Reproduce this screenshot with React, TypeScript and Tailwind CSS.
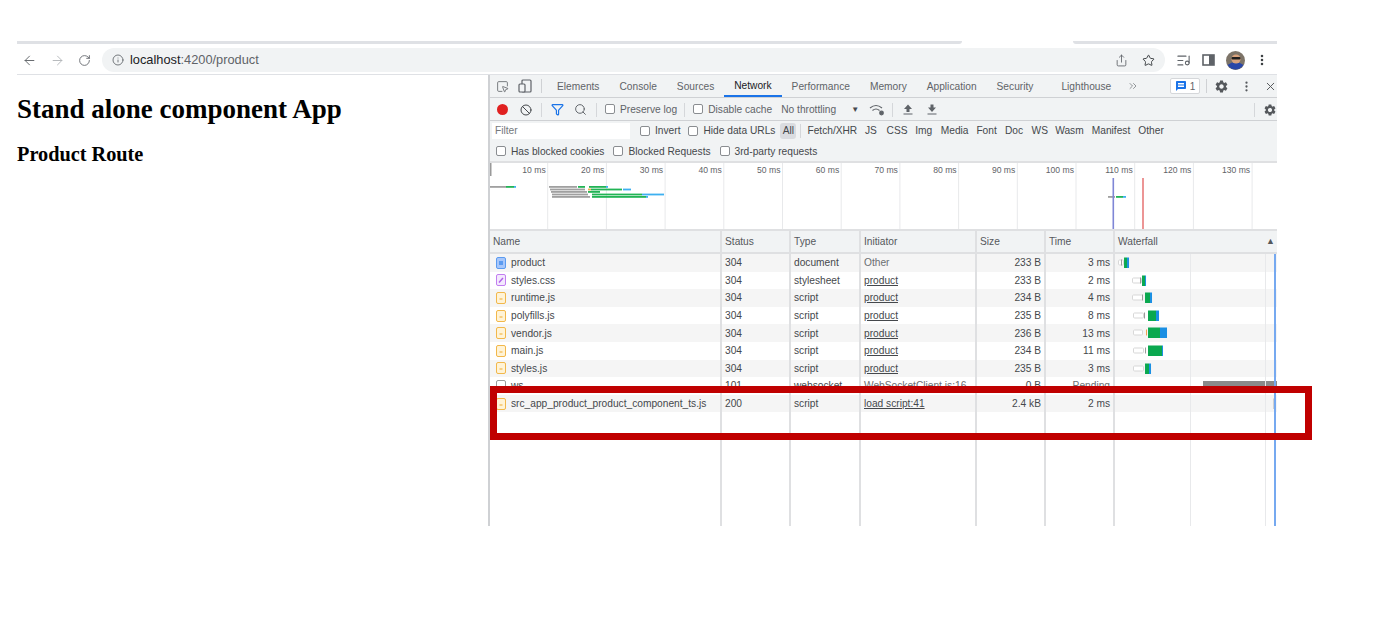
import { ArrowLeft, ArrowRight, Ban, ChevronsRight, EllipsisVertical, Funnel, Info, ListMusic, RotateCw, Search, Share, SquareMousePointer, Star, X } from "lucide-react"
import { MdMessage, MdSettings } from "react-icons/md"

type Bar = { x: number; w: number; c: string }

const rows = [
  { name: "product", kind: "doc", status: "304", type: "document", init: "Other", link: false, size: "233 B", time: "3 ms", bars: [{ x: 3, w: 6, c: "box" }, { x: 6, w: 1, c: "#9a9a9a" }, { x: 9, w: 3, c: "#0aa84f" }, { x: 12, w: 2, c: "#1a8fe3" }] },
  { name: "styles.css", kind: "css", status: "304", type: "stylesheet", init: "product", link: true, size: "233 B", time: "2 ms", bars: [{ x: 17, w: 10, c: "box" }, { x: 25, w: 1, c: "#9a9a9a" }, { x: 27, w: 3, c: "#0aa84f" }, { x: 30, w: 1, c: "#1a8fe3" }] },
  { name: "runtime.js", kind: "js", status: "304", type: "script", init: "product", link: true, size: "234 B", time: "4 ms", bars: [{ x: 17, w: 11, c: "box" }, { x: 27, w: 1, c: "#9a9a9a" }, { x: 30, w: 5, c: "#0aa84f" }, { x: 35, w: 2, c: "#1a8fe3" }] },
  { name: "polyfills.js", kind: "js", status: "304", type: "script", init: "product", link: true, size: "235 B", time: "8 ms", bars: [{ x: 18, w: 11, c: "box" }, { x: 29, w: 1, c: "#9a9a9a" }, { x: 33, w: 8, c: "#0aa84f" }, { x: 41, w: 3, c: "#1a8fe3" }] },
  { name: "vendor.js", kind: "js", status: "304", type: "script", init: "product", link: true, size: "236 B", time: "13 ms", bars: [{ x: 18, w: 10, c: "box" }, { x: 31, w: 1, c: "#f0a050" }, { x: 33, w: 12, c: "#0aa84f" }, { x: 45, w: 7, c: "#1a8fe3" }] },
  { name: "main.js", kind: "js", status: "304", type: "script", init: "product", link: true, size: "234 B", time: "11 ms", bars: [{ x: 18, w: 11, c: "box" }, { x: 30, w: 1, c: "#9a9a9a" }, { x: 33, w: 14, c: "#0aa84f" }, { x: 47, w: 1, c: "#1a8fe3" }] },
  { name: "styles.js", kind: "js", status: "304", type: "script", init: "product", link: true, size: "235 B", time: "3 ms", bars: [{ x: 18, w: 11, c: "box" }, { x: 30, w: 4, c: "#0aa84f" }, { x: 34, w: 2, c: "#1a8fe3" }] },
  { name: "ws", kind: "ws", status: "101", type: "websocket", init: "WebSocketClient.js:16", link: false, size: "0 B", time: "Pending", bars: [{ x: 88, w: 74, c: "#8a8a8a" }] },
  { name: "src_app_product_product_component_ts.js", kind: "js", status: "200", type: "script", init: "load script:41", link: true, size: "2.4 kB", time: "2 ms", bars: [{ x: 158, w: 2, c: "#d0d0d0" }] as Bar[] },
]

const ticks = ["10 ms", "20 ms", "30 ms", "40 ms", "50 ms", "60 ms", "70 ms", "80 ms", "90 ms", "100 ms", "110 ms", "120 ms", "130 ms"]

const filters = [
  { t: "Fetch/XHR", w: "w-[49px]" },
  { t: "JS", w: "w-[13px]" },
  { t: "CSS", w: "w-[20px]" },
  { t: "Img", w: "w-[17px]" },
  { t: "Media", w: "w-[27px]" },
  { t: "Font", w: "w-[20px]" },
  { t: "Doc", w: "w-[18px]" },
  { t: "WS", w: "w-[15px]" },
  { t: "Wasm", w: "w-[28px]" },
  { t: "Manifest", w: "w-[38px]" },
  { t: "Other", w: "w-[26px]" },
]

function Check({ label, className }: { label: string; className?: string }) {
  return (
    <div className={`flex items-center gap-[5px] ${className ?? ""}`}>
      <span className="w-[10px] h-[10px] rounded-[2px] border border-[#8a8d91] bg-white shrink-0" />
      <span className="whitespace-nowrap">{label}</span>
    </div>
  )
}

function FileIcon({ kind }: { kind: string }) {
  if (kind === "doc") {
    return (
      <svg width="10" height="12" viewBox="0 0 10 12" className="shrink-0 ml-[3px]">
        <rect x="0.5" y="0.5" width="9" height="11" rx="1.5" fill="#a8c7fa" stroke="#5b9bf0" />
        <rect x="3" y="4" width="4" height="4" fill="#5b9bf0" />
      </svg>
    )
  }
  if (kind === "css") {
    return (
      <svg width="10" height="12" viewBox="0 0 10 12" className="shrink-0 ml-[3px]">
        <rect x="0.5" y="0.5" width="9" height="11" rx="1.5" fill="#f3e8fd" stroke="#c27ef0" />
        <path d="M3 8.5 L7 4" stroke="#b05ee8" strokeWidth="1.4" />
      </svg>
    )
  }
  if (kind === "js") {
    return (
      <svg width="10" height="12" viewBox="0 0 10 12" className="shrink-0 ml-[3px]">
        <rect x="0.5" y="0.5" width="9" height="11" rx="1.5" fill="#fff3d6" stroke="#f2b84b" />
        <path d="M3.5 7 H6.5" stroke="#f2b84b" strokeWidth="1.2" />
      </svg>
    )
  }
  return (
    <svg width="10" height="12" viewBox="0 0 10 12" className="shrink-0 ml-[3px]">
      <rect x="0.5" y="0.5" width="9" height="11" rx="1.5" fill="#fff" stroke="#9a9a9a" />
    </svg>
  )
}

function Column({ title, width, right, render }: { title: string; width: string; right?: boolean; render: (r: (typeof rows)[number]) => React.ReactNode }) {
  return (
    <div className={`${width} shrink-0 flex flex-col border-r-2 border-[#dfe0e2]`}>
      <div className="h-[23px] shrink-0 flex items-center px-[3px] bg-[#f1f3f4] border-b-2 border-[#dfe0e2] text-[#55585c]">{title}</div>
      {rows.map((r, i) => (
        <div key={r.name} className={`h-[17.6px] shrink-0 flex items-center gap-[5px] px-[3px] overflow-hidden whitespace-nowrap ${right ? "justify-end" : ""} ${i % 2 === 0 ? "bg-[#f5f5f5]" : "bg-white"}`}>
          {render(r)}
        </div>
      ))}
    </div>
  )
}

function Overview() {
  const marks = [
    [490, 186, 16, "#a0a0a0"], [506, 186, 8, "#22b455"], [514, 186, 2, "#3db0f0"],
    [549, 186, 28, "#a0a0a0"], [578, 186, 7, "#22b455"], [589, 186, 17, "#22b455"], [606, 186, 2, "#3db0f0"],
    [550, 188.6, 35, "#a0a0a0"], [588, 188.6, 3, "#f0b050"], [591, 188.6, 31, "#22b455"], [623, 188.6, 8, "#3db0f0"],
    [551, 191, 36, "#a0a0a0"], [588, 191, 12, "#22b455"],
    [552, 193.6, 36, "#a0a0a0"], [592, 193.6, 50, "#22b455"], [642, 193.6, 22, "#3db0f0"],
    [552, 196, 38, "#a0a0a0"], [592, 196, 54, "#22b455"], [646, 196, 2, "#3db0f0"],
    [1108, 196, 7, "#a0a0a0"], [1116, 196, 7, "#22b455"], [1123, 196, 3, "#3db0f0"],
  ] as const
  return (
    <svg width="787" height="66" viewBox="490 163 787 66" className="block">
      {ticks.map((t, i) => {
        const x = 489 + 58.7 * (i + 1)
        return (
          <g key={t}>
            <line x1={x} y1="163" x2={x} y2="229" stroke="#e8e9eb" />
            <text x={x - 2} y="173" textAnchor="end" fontSize="8.6" fontFamily="Liberation Sans" fill="#5f6368">{t}</text>
          </g>
        )
      })}
      <rect x="490" y="163" width="1.5" height="13" fill="#9a9a9a" />
      {marks.map(([x, y, w, c], i) => (
        <rect key={i} x={x} y={y} width={w} height="1.8" fill={c} />
      ))}
      <rect x="1112.5" y="178" width="1.6" height="51" fill="#7f86d6" />
      <rect x="1142.2" y="178" width="1.6" height="51" fill="#e87c7c" />
    </svg>
  )
}

export default function App() {
  return (
    <div className="relative w-[1384px] h-[623px] overflow-hidden bg-white pt-[41px] pl-[17px] font-['Liberation_Sans',sans-serif]">
      <div className="w-[1260px] flex flex-col">
        {/* tab strip leftovers */}
        <div className="h-[3px] flex justify-between">
          <div className="w-[945px] bg-[#dfe1e5] rounded-br-[4px]" />
          <div className="w-[204px] bg-[#dfe1e5] rounded-bl-[4px]" />
        </div>

        {/* browser toolbar */}
        <div className="h-[31px] flex items-center border-b border-[#dfe1e5] pt-[3px] pb-[1px] text-[#5f6368]">
          <ArrowLeft className="w-[15px] h-[15px] ml-[5px]" strokeWidth={1.5} />
          <ArrowRight className="w-[15px] h-[15px] ml-[13px] text-[#b3b6ba]" strokeWidth={1.5} />
          <RotateCw className="w-[13px] h-[13px] ml-[13px]" strokeWidth={1.6} />
          <div className="ml-[11px] w-[1063px] h-[24px] rounded-full bg-[#f1f3f4] flex items-center pl-[10px] pr-[8px]">
            <Info className="w-[12px] h-[12px]" strokeWidth={1.7} />
            <span className="ml-[6px] text-[12.8px] text-[#5f6368]"><span className="text-[#202124]">localhost</span>:4200/product</span>
            <Share className="ml-auto w-[13px] h-[13px]" strokeWidth={1.6} />
            <Star className="ml-[14px] mr-[2px] w-[13px] h-[13px] text-[#3c4043]" strokeWidth={1.8} />
          </div>
          <ListMusic className="ml-[11px] w-[15px] h-[15px]" strokeWidth={1.7} />
          <svg width="13" height="12" viewBox="0 0 13 12" className="ml-[11px]">
            <rect x="1" y="1" width="11" height="10" fill="#fff" stroke="#5f6368" strokeWidth="1.6" />
            <rect x="7" y="1" width="5" height="10" fill="#5f6368" />
          </svg>
          <svg width="19" height="19" viewBox="0 0 19 19" className="ml-[11px]">
            <circle cx="9.5" cy="9.5" r="9.5" fill="#7d7468" />
            <path d="M1.5 14 Q9.5 8 17.5 14 A9.5 9.5 0 0 1 1.5 14Z" fill="#2a47a8" />
            <circle cx="10" cy="8" r="4.6" fill="#d9a27c" />
            <rect x="5.5" y="6" width="9" height="2.4" rx="1" fill="#1d1d1d" />
          </svg>
          <EllipsisVertical className="ml-[10px] w-[14px] h-[14px] text-[#3c4043]" strokeWidth={2.4} />
        </div>

        <div className="flex h-[451px]">
          {/* page */}
          <div className="w-[471px] shrink-0 font-['Liberation_Serif',serif] font-bold text-black">
            <h1 className="text-[27px] leading-[30px] mt-[19px]">Stand alone component App</h1>
            <h2 className="text-[20.3px] leading-[24px] mt-[18px]">Product Route</h2>
          </div>

          {/* devtools */}
          <div className="w-[789px] shrink-0 flex flex-col border-l-2 border-[#cfd1d4] text-[10.2px] text-[#45484c] overflow-hidden">
            <div className="h-[23px] shrink-0 flex items-center bg-[#f1f3f4] border-b border-[#cfd1d4] text-[#5f6368]">
              <SquareMousePointer className="ml-[6px] w-[13px] h-[13px]" strokeWidth={1.5} />
              <svg width="14" height="14" viewBox="0 0 14 14" className="ml-[9px]" fill="none" stroke="#5f6368" strokeWidth="1.2">
                <rect x="4" y="1" width="9" height="12" rx="1" />
                <rect x="1" y="5" width="6" height="8" rx="1" fill="#f1f3f4" />
              </svg>
              <div className="ml-[9px] w-px h-[14px] bg-[#cfd1d4]" />
              <div className="ml-[5px] flex self-stretch items-center">
                {["Elements", "Console", "Sources"].map((t) => (
                  <span key={t} className="px-[10px] pt-[2px]">{t}</span>
                ))}
                <span className="px-[10px] pt-[2px] self-stretch flex items-center text-[#202124] border-b-2 border-[#1a73e8]">Network</span>
                {["Performance", "Memory", "Application", "Security"].map((t) => (
                  <span key={t} className="px-[10px] pt-[2px]">{t}</span>
                ))}
                <span className="ml-[8px] px-[10px] pt-[2px]">Lighthouse</span>
              </div>
              <ChevronsRight className="ml-[6px] w-[12px] h-[12px]" strokeWidth={1.3} />
              <div className="ml-auto w-[30px] h-[16px] rounded-[2px] border border-[#d5d7da] bg-white flex items-center justify-center gap-[3px] text-[10px]">
                <MdMessage className="w-[12px] h-[12px] text-[#1a73e8]" />
                <span>1</span>
              </div>
              <div className="ml-[6px] w-px h-[14px] bg-[#cfd1d4]" />
              <MdSettings className="ml-[7px] w-[15px] h-[15px] text-[#55585c]" />
              <EllipsisVertical className="ml-[11px] w-[13px] h-[13px] text-[#55585c]" strokeWidth={2.2} />
              <X className="ml-[11px] w-[13px] h-[13px] shrink-0 text-[#55585c]" strokeWidth={1.8} />
            </div>

            <div className="h-[23px] shrink-0 flex items-center bg-[#f1f3f4] border-b border-[#cfd1d4] pt-[1px] text-[#5f6368]">
              <span className="ml-[7px] w-[11px] h-[11px] rounded-full bg-[#e02020]" />
              <Ban className="ml-[12px] w-[12px] h-[12px] text-[#45484c]" strokeWidth={2} />
              <div className="ml-[9px] w-px h-[14px] bg-[#d5d7da]" />
              <Funnel className="ml-[9px] w-[13px] h-[13px] text-[#1a73e8]" strokeWidth={2.2} />
              <Search className="ml-[10px] w-[13px] h-[13px]" strokeWidth={1.8} />
              <div className="ml-[9px] w-px h-[14px] bg-[#d5d7da]" />
              <Check label="Preserve log" className="ml-[8px]" />
              <div className="ml-[7px] w-px h-[14px] bg-[#d5d7da]" />
              <Check label="Disable cache" className="ml-[8px]" />
              <span className="ml-[9px]">No throttling</span>
              <span className="ml-[15px] text-[8px] text-[#45484c]">▼</span>
              <svg width="16" height="12" viewBox="0 0 16 12" className="ml-[10px]" fill="none" stroke="#5f6368" strokeWidth="1.2">
                <path d="M1 4 Q7 -1 13 4" />
                <path d="M3.5 6.5 Q7 3.5 10.5 6.5" />
                <circle cx="12.5" cy="9" r="1.8" fill="#5f6368" />
              </svg>
              <div className="ml-[7px] w-px h-[14px] bg-[#d5d7da]" />
              <svg width="10" height="11" viewBox="0 0 10 11" className="ml-[10px]" fill="#5f6368">
                <path d="M5 0.5 L9 5 H6.5 V8 H3.5 V5 H1Z" />
                <rect x="0.5" y="9.5" width="9" height="1" />
              </svg>
              <svg width="10" height="11" viewBox="0 0 10 11" className="ml-[14px]" fill="#5f6368">
                <path d="M5 8 L9 3.5 H6.5 V0.5 H3.5 V3.5 H1Z" />
                <rect x="0.5" y="9.5" width="9" height="1" />
              </svg>
              <div className="ml-auto w-px h-[14px] bg-[#d5d7da]" />
              <MdSettings className="ml-[8px] mr-0 w-[14px] h-[14px] shrink-0 text-[#55585c]" />
            </div>

            <div className="h-[21px] shrink-0 flex items-center bg-[#f1f3f4] pb-[1px] text-[#45484c]">
              <div className="ml-[2px] w-[138px] h-[16px] bg-white flex items-center pl-[3px] text-[#75787c]">Filter</div>
              <Check label="Invert" className="ml-[10px]" />
              <Check label="Hide data URLs" className="ml-[8px]" />
              <span className="ml-[5px] w-[16px] h-[16px] rounded-[3px] bg-[#dadce0] flex items-center justify-center">All</span>
              <div className="ml-[4px] w-px h-[14px] bg-[#d5d7da]" />
              <div className="ml-[6px] flex gap-[8.6px]">
                {filters.map((f) => (
                  <span key={f.t} className={`${f.w} whitespace-nowrap`}>{f.t}</span>
                ))}
              </div>
            </div>

            <div className="h-[21px] shrink-0 flex items-center bg-[#f1f3f4] border-b-2 border-[#dfe0e2] pl-[6px]">
              <Check label="Has blocked cookies" />
              <Check label="Blocked Requests" className="ml-[9px]" />
              <Check label="3rd-party requests" className="ml-[9px]" />
            </div>

            <div className="h-[68px] shrink-0 border-b-2 border-[#dfe0e2]">
              <Overview />
            </div>

            {/* request table */}
            <div className="flex flex-1 min-h-0">
              <Column
                title="Name"
                width="w-[232px]"
                render={(r) => (
                  <>
                    <FileIcon kind={r.kind} />
                    <span>{r.name}</span>
                  </>
                )}
              />
              <Column title="Status" width="w-[69px]" render={(r) => r.status} />
              <Column title="Type" width="w-[70px]" render={(r) => r.type} />
              <Column title="Initiator" width="w-[116px]" render={(r) => (r.link ? <span className="underline">{r.init}</span> : <span className="text-[#6b6e72]">{r.init}</span>)} />
              <Column title="Size" width="w-[69px]" right render={(r) => r.size} />
              <Column title="Time" width="w-[69px]" right render={(r) => (r.time === "Pending" ? <span className="text-[#6b6e72]">{r.time}</span> : r.time)} />
              <div className="relative flex-1 flex flex-col">
                <div className="h-[23px] shrink-0 flex items-center justify-between pl-[3px] pr-[2px] bg-[#f1f3f4] border-b-2 border-[#dfe0e2] text-[#55585c]">
                  <span>Waterfall</span>
                  <span className="text-[9px]">▲</span>
                </div>
                {rows.map((r, i) => (
                  <div key={r.name} className={`h-[17.6px] shrink-0 ${i % 2 === 0 ? "bg-[#f5f5f5]" : "bg-white"}`}>
                    <svg width="162" height="17.6" viewBox="0 0 162 17.6" className="block">
                      {r.bars.map((b, j) =>
                        b.c === "box" ? (
                          <rect key={j} x={b.x + 0.5} y="6" width={b.w - 1} height="5" rx="1" fill="#fff" stroke="#d8d8d8" />
                        ) : b.c === "#8a8a8a" ? (
                          <rect key={j} x={b.x} y="4" width={b.w} height="5" fill={b.c} />
                        ) : b.c === "#9a9a9a" || b.c === "#f0a050" ? (
                          <rect key={j} x={b.x} y="5.5" width={b.w} height="6" fill={b.c} />
                        ) : (
                          <rect key={j} x={b.x} y="3.5" width={b.w} height="10.5" fill={b.c} />
                        ),
                      )}
                    </svg>
                  </div>
                ))}
                <div className="absolute top-[23px] bottom-0 left-[75px] w-px bg-[#e8e9eb]" />
                <div className="absolute top-[23px] bottom-0 left-[150px] w-px bg-[#e8e9eb]" />
                <div className="absolute top-[23px] bottom-0 left-[159px] w-[1.5px] bg-[#76a9f0]" />
              </div>
            </div>
          </div>
        </div>
      </div>

      {/* red highlight */}
      <div className="absolute left-[490px] top-[386px] w-[822px] h-[54px] border-[7px] border-[#c00000]" />
    </div>
  )
}
